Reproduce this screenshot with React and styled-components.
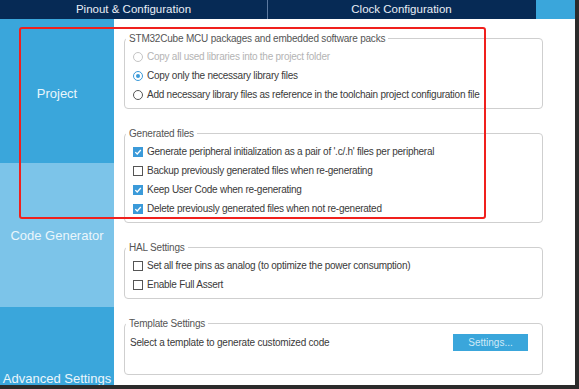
import React from 'react';
import styled, { createGlobalStyle } from 'styled-components';

const GlobalStyle = createGlobalStyle`
  html, body {
    margin: 0;
    padding: 0;
    background: #2b2b2b;
  }
  body {
    font-family: "Liberation Sans", Arial, sans-serif;
  }
`;

const Frame = styled.div`
  position: relative;
  width: 575px;
  height: 385px;
  overflow: hidden;
  display: flex;
  flex-direction: column;
  background: #ffffff;
`;

const TopBar = styled.div`
  display: flex;
  height: 19px;
  background: #3aa6db;
  flex-shrink: 0;
`;

const Tab = styled.div`
  width: 268px;
  height: 19px;
  background: #062a55;
  color: #e9eef5;
  font-size: 11.5px;
  display: flex;
  align-items: center;
  justify-content: center;
  padding-bottom: 1px;
  box-sizing: border-box;
  border-right: 1px solid ${(p) => (p.$divider ? '#5c7aa0' : '#062a55')};
`;

const Body = styled.div`
  flex: 1;
  display: flex;
  min-height: 0;
`;

const Sidebar = styled.div`
  width: 114px;
  flex-shrink: 0;
  background: #3aa6db;
  padding-top: 5px;
  overflow: hidden;
`;

const NavItem = styled.div`
  height: ${(p) => p.$h}px;
  background: ${(p) => (p.$active ? '#7cc4e9' : '#3aa6db')};
  color: #eaf6fc;
  font-size: 13px;
  display: flex;
  align-items: center;
  justify-content: center;
  white-space: nowrap;
`;

const Content = styled.div`
  flex: 1;
  background: #ffffff;
  padding: 13px 32px 0 10px;
  display: flex;
  flex-direction: column;
  gap: 18px;
`;

const Group = styled.fieldset`
  margin: 0;
  padding: ${(p) => p.$pad || '2px 8px 4px 8px'};
  border: 1px solid #cfcfcf;
  border-radius: 4px;
  min-width: 0;
`;

const Legend = styled.legend`
  font-size: 10px;
  letter-spacing: -0.2px;
  line-height: 13px;
  color: #555;
  padding: 0 3px;
  margin-left: -7px;
`;

const Row = styled.div`
  height: 19px;
  display: flex;
  align-items: center;
  gap: 4px;
  font-size: 10px;
  letter-spacing: -0.25px;
  color: ${(p) => (p.$disabled ? '#b4b4b4' : '#3a3a3a')};
  white-space: nowrap;
`;

const Radio = styled.span`
  width: 8px;
  height: 8px;
  border-radius: 50%;
  border: 1px solid ${(p) => (p.$disabled ? '#c4c4c4' : p.$checked ? '#3b9ad9' : '#555')};
  background: #fff;
  display: flex;
  align-items: center;
  justify-content: center;
  flex-shrink: 0;
  &::after {
    content: '';
    width: 4px;
    height: 4px;
    border-radius: 50%;
    background: ${(p) => (p.$checked ? '#3b9ad9' : 'transparent')};
  }
`;

const Box = styled.span`
  width: 8px;
  height: 8px;
  border: 1px solid ${(p) => (p.$checked ? '#3b9ad9' : '#555')};
  background: ${(p) => (p.$checked ? '#3b9ad9' : '#fff')};
  display: flex;
  align-items: center;
  justify-content: center;
  flex-shrink: 0;
`;

const Check = () => (
  <svg width="8" height="8" viewBox="0 0 8 8">
    <path d="M1.3 4.1 L3.2 6 L6.8 2" fill="none" stroke="#fff" strokeWidth="1.3" />
  </svg>
);

const TemplateRow = styled.div`
  height: 22px;
  display: flex;
  align-items: center;
  justify-content: space-between;
  font-size: 10px;
  letter-spacing: -0.2px;
  color: #3a3a3a;
  padding: 0 6px 0 0;
  margin-left: -3px;
`;

const SettingsButton = styled.button`
  width: 75px;
  height: 17px;
  border: none;
  background: #3aa6db;
  color: #cfe9f7;
  font-family: inherit;
  font-size: 10px;
  padding: 0;
`;

const Highlight = styled.div`
  position: absolute;
  left: 19px;
  top: 27px;
  width: 467px;
  height: 192px;
  box-sizing: border-box;
  border: 2.5px solid #f0201d;
  border-radius: 3px;
  pointer-events: none;
`;

const RadioRow = ({ checked, disabled, children }) => (
  <Row $disabled={disabled}>
    <Radio $checked={checked} $disabled={disabled} />
    {children}
  </Row>
);

const CheckRow = ({ checked, children }) => (
  <Row>
    <Box $checked={checked}>{checked && <Check />}</Box>
    {children}
  </Row>
);

export default function App() {
  return (
    <>
      <GlobalStyle />
      <Frame>
        <TopBar>
          <Tab $divider>Pinout &amp; Configuration</Tab>
          <Tab>Clock Configuration</Tab>
        </TopBar>
        <Body>
          <Sidebar>
            <NavItem $h={139}>Project</NavItem>
            <NavItem $h={144} $active>Code Generator</NavItem>
            <NavItem $h={142}>Advanced Settings</NavItem>
          </Sidebar>
          <Content>
            <Group>
              <Legend>STM32Cube MCU packages and embedded software packs</Legend>
              <RadioRow disabled>Copy all used libraries into the project folder</RadioRow>
              <RadioRow checked>Copy only the necessary library files</RadioRow>
              <RadioRow>Add necessary library files as reference in the toolchain project configuration file</RadioRow>
            </Group>
            <Group>
              <Legend>Generated files</Legend>
              <CheckRow checked>Generate peripheral initialization as a pair of '.c/.h' files per peripheral</CheckRow>
              <CheckRow>Backup previously generated files when re-generating</CheckRow>
              <CheckRow checked>Keep User Code when re-generating</CheckRow>
              <CheckRow checked>Delete previously generated files when not re-generated</CheckRow>
            </Group>
            <Group>
              <Legend>HAL Settings</Legend>
              <CheckRow>Set all free pins as analog (to optimize the power consumption)</CheckRow>
              <CheckRow>Enable Full Assert</CheckRow>
            </Group>
            <Group $pad="1px 8px 21px 8px">
              <Legend>Template Settings</Legend>
              <TemplateRow>
                <span>Select a template to generate customized code</span>
                <SettingsButton>Settings...</SettingsButton>
              </TemplateRow>
            </Group>
          </Content>
        </Body>
        <Highlight />
      </Frame>
    </>
  );
}
